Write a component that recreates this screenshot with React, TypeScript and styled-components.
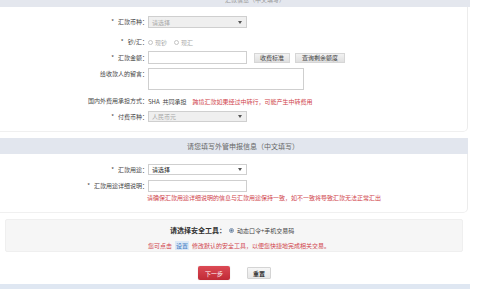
import React from "react";
import styled, { createGlobalStyle } from "styled-components";

const GlobalStyle = createGlobalStyle`
  html, body {
    margin: 0;
    padding: 0;
    background: #fff;
  }
  body {
    font-family: "Noto Sans CJK SC", "Noto Sans", sans-serif;
    font-size: 6px;
    color: #4a4a4a;
  }
`;

const Page = styled.div`
  width: 480px;
  height: 289px;
  overflow: hidden;
  display: flex;
  flex-direction: column;
`;

const TopBand = styled.div`
  width: 470px;
  height: 7px;
  background: #e4e7ee;
  overflow: hidden;
  display: flex;
  justify-content: center;
  color: #999;
  font-size: 6px;
  line-height: 6px;

  span {
    transform: translateY(-3px);
    padding-left: 40px;
  }
`;

const Card = styled.div<{ $pt: number; $pb: number }>`
  width: 468px;
  padding-top: ${(p) => p.$pt}px;
  padding-bottom: ${(p) => p.$pb}px;
  border-right: 1px solid #ececec;
  border-bottom: 1px solid #f0f0f0;
  border-bottom-right-radius: 5px;
  box-sizing: border-box;
`;

const Row = styled.div<{ $h: number; $mt?: number; $top?: boolean }>`
  display: flex;
  align-items: ${(p) => (p.$top ? "flex-start" : "center")};
  height: ${(p) => p.$h}px;
  margin-top: ${(p) => p.$mt ?? 0}px;
`;

const Label = styled.div<{ $pt?: number }>`
  width: 148px;
  flex-shrink: 0;
  text-align: right;
  white-space: nowrap;
  line-height: 8px;
  padding-top: ${(p) => p.$pt ?? 0}px;
  color: #444;
`;

const Star = styled.span`
  margin-right: 4px;
  color: #444;
`;

const Select = styled.div<{ $disabled?: boolean }>`
  width: 99px;
  height: 100%;
  box-sizing: border-box;
  border: 1px solid #cfcfcf;
  background: ${(p) => (p.$disabled ? "#efefef" : "#fff")};
  color: ${(p) => (p.$disabled ? "#a8a8a8" : "#222")};
  display: flex;
  align-items: center;
  justify-content: space-between;
  padding: 0 4px 0 3px;
`;

const Arrow = styled.span`
  width: 0;
  height: 0;
  border-left: 2.5px solid transparent;
  border-right: 2.5px solid transparent;
  border-top: 3px solid #555;
`;

const Input = styled.div<{ $w: number }>`
  width: ${(p) => p.$w}px;
  height: 100%;
  box-sizing: border-box;
  border: 1px solid #cfcfcf;
  background: #fff;
`;

const RadioGroup = styled.div`
  display: flex;
  align-items: center;
  gap: 7px;
  color: #aaa;
`;

const RadioItem = styled.label`
  display: flex;
  align-items: center;
  gap: 2px;
`;

const Circle = styled.span<{ $on?: boolean }>`
  width: 5px;
  height: 5px;
  border-radius: 50%;
  box-sizing: border-box;
  border: 1px solid ${(p) => (p.$on ? "#7d93ad" : "#c4c4c4")};
  background: ${(p) => (p.$on ? "radial-gradient(circle, #5d7896 45%, #dfe6ef 50%)" : "#fff")};
`;

const GrayButton = styled.div<{ $w: number; $ml: number }>`
  width: ${(p) => p.$w}px;
  height: 10px;
  margin-left: ${(p) => p.$ml}px;
  box-sizing: border-box;
  border: 1px solid #d6d6d6;
  background: linear-gradient(#f2f2f2, #e0e0e0);
  color: #444;
  display: flex;
  align-items: center;
  justify-content: center;
`;

const Plain = styled.span<{ $ml?: number }>`
  margin-left: ${(p) => p.$ml ?? 0}px;
  color: #444;
  white-space: nowrap;
`;

const Warn = styled.span<{ $ml?: number }>`
  margin-left: ${(p) => p.$ml ?? 0}px;
  color: #d0434b;
  white-space: nowrap;
`;

const SectionHead = styled.div`
  width: 468px;
  height: 16px;
  margin-top: 6px;
  background: #e2e6ee;
  display: flex;
  align-items: center;
  justify-content: center;
  padding-left: 18px;
  box-sizing: border-box;
  color: #666;
  font-size: 7px;
`;

const NoteRow = styled.div`
  margin-top: 2px;
  padding-left: 147px;
  height: 8px;
  line-height: 8px;
`;

const SecurityBox = styled.div`
  width: 458px;
  margin: 6px 0 0 5px;
  height: 33px;
  box-sizing: border-box;
  padding-top: 5px;
  background: #f6f6f6;
  border: 1px solid #efefef;
  border-radius: 2px;
`;

const SecLine = styled.div<{ $pl: number; $mt?: number }>`
  display: flex;
  align-items: center;
  height: 10px;
  padding-left: ${(p) => p.$pl}px;
  margin-top: ${(p) => p.$mt ?? 0}px;
  white-space: nowrap;
`;

const SecLabel = styled.span`
  font-weight: bold;
  color: #333;
  font-size: 7px;
  margin-right: 3px;
`;

const LinkTag = styled.span`
  color: #3a79c2;
  background: #dbe8f6;
  padding: 0 1px;
  margin: 0 3px;
`;

const Actions = styled.div`
  display: flex;
  align-items: center;
  height: 14px;
  margin-top: 14px;
  padding-left: 198px;
  gap: 17px;
`;

const PrimaryButton = styled.div`
  width: 32px;
  height: 14px;
  border-radius: 2px;
  background: linear-gradient(#dc4a55, #c02a36);
  color: #fff;
  display: flex;
  align-items: center;
  justify-content: center;
  box-shadow: 0 0 1px rgba(0, 0, 0, 0.3);
`;

const ResetButton = styled.div`
  width: 24px;
  height: 12px;
  border-radius: 1px;
  border: 1px solid #d4d4d4;
  background: linear-gradient(#f6f6f6, #e6e6e6);
  color: #333;
  font-weight: bold;
  display: flex;
  align-items: center;
  justify-content: center;
  box-sizing: border-box;
`;

const BottomBand = styled.div`
  width: 470px;
  height: 5px;
  margin-top: 4px;
  background: #dfe7f2;
`;

export default function App() {
  return (
    <Page>
      <GlobalStyle />
      <TopBand>
        <span>汇款信息（中文填写）</span>
      </TopBand>

      <Card $pt={9} $pb={9}>
        <Row $h={12}>
          <Label>
            <Star>*</Star>汇款币种：
          </Label>
          <Select $disabled>
            <span>请选择</span>
            <Arrow />
          </Select>
        </Row>
        <Row $h={12} $mt={8}>
          <Label>
            <Star>*</Star>钞/汇：
          </Label>
          <RadioGroup>
            <RadioItem>
              <Circle />
              现钞
            </RadioItem>
            <RadioItem>
              <Circle />
              现汇
            </RadioItem>
          </RadioGroup>
        </Row>
        <Row $h={13} $mt={3}>
          <Label>
            <Star>*</Star>汇款金额：
          </Label>
          <Input $w={99} />
          <GrayButton $w={36} $ml={7}>收费标准</GrayButton>
          <GrayButton $w={50} $ml={5}>查询剩余额度</GrayButton>
        </Row>
        <Row $h={22} $mt={4} $top>
          <Label $pt={2}>给收款人的留言：</Label>
          <Input $w={156} />
        </Row>
        <Row $h={12} $mt={5}>
          <Label>国内外费用承担方式：</Label>
          <Plain>SHA</Plain>
          <Plain $ml={3}>共同承担</Plain>
          <Warn $ml={6}>跨境汇款如果经过中转行，可能产生中转费用</Warn>
        </Row>
        <Row $h={11} $mt={4}>
          <Label>
            <Star>*</Star>付费币种：
          </Label>
          <Select $disabled>
            <span>人民币元</span>
            <Arrow />
          </Select>
        </Row>
      </Card>

      <SectionHead>请您填写外管申报信息（中文填写）</SectionHead>

      <Card $pt={10} $pb={10}>
        <Row $h={11}>
          <Label>
            <Star>*</Star>汇款用途：
          </Label>
          <Select>
            <span>请选择</span>
            <Arrow />
          </Select>
        </Row>
        <Row $h={12} $mt={5}>
          <Label>
            <Star>*</Star>汇款用途详细说明：
          </Label>
          <Input $w={99} />
        </Row>
        <NoteRow>
          <Warn>请确保汇款用途详细说明的信息与汇款用途保持一致，如不一致将导致汇款无法正常汇出</Warn>
        </NoteRow>
      </Card>

      <SecurityBox>
        <SecLine $pl={164}>
          <SecLabel>请选择安全工具：</SecLabel>
          <RadioItem>
            <Circle $on />
            <Plain $ml={1}>动态口令+手机交易码</Plain>
          </RadioItem>
        </SecLine>
        <SecLine $pl={142} $mt={5}>
          <Warn>您可点击</Warn>
          <LinkTag>设置</LinkTag>
          <Warn>修改默认的安全工具，以便您快捷地完成相关交易。</Warn>
        </SecLine>
      </SecurityBox>

      <Actions>
        <PrimaryButton>下一步</PrimaryButton>
        <ResetButton>重置</ResetButton>
      </Actions>

      <BottomBand />
    </Page>
  );
}
